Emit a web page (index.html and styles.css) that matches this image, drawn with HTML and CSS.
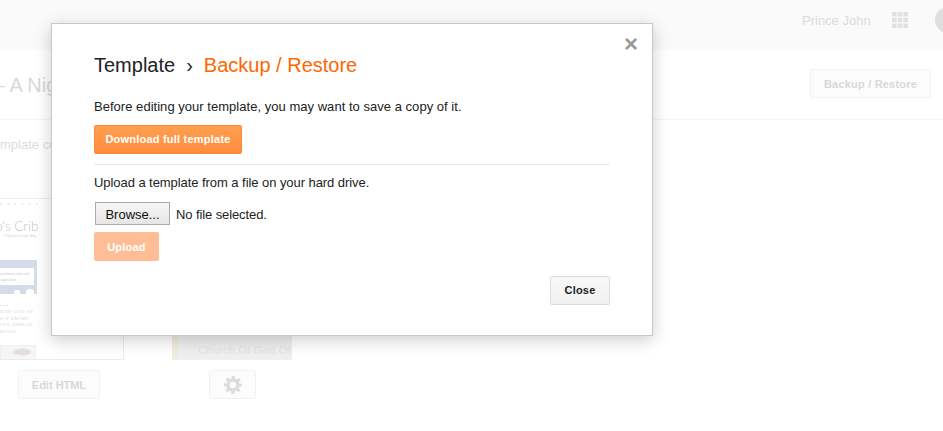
FILE: index.html
```html
<!DOCTYPE html>
<html lang="en">
<head>
<meta charset="utf-8">
<title>Template - Backup / Restore</title>
<link rel="stylesheet" href="styles.css">
</head>
<body>
<div class="page">
  <header class="topbar">
    <span class="user">Prince John</span>
    <svg class="apps" width="16" height="16" viewBox="0 0 16 16" aria-hidden="true">
      <path d="M0 0h4.600v4.600H0zM5.700 0h4.600v4.600H5.700zM11.400 0H16v4.600h-4.600zM0 5.700h4.600v4.600H0zM5.700 5.700h4.600v4.600H5.700zM11.400 5.700H16v4.600h-4.600zM0 11.400h4.600V16H0zM5.700 11.400h4.600V16H5.700zM11.400 11.400H16V16h-4.600z"/>
    </svg>
    <span class="avatar"></span>
  </header>
  <section class="titlerow">
    <h1 class="blogtitle">&#8211; A Nig</h1>
    <button class="ghost backup">Backup / Restore</button>
  </section>
  <p class="desc">mplate cu</p>
  <section class="themes">
    <div class="theme">
      <div class="thumb">
        <div class="thumb-dots">&#8226; &#8226; &#8226; &#8226; &#8226; &#8226;</div>
        <div class="thumb-name">o's Crib</div>
        <div class="thumb-sub">A Nigerian Lifestyle Blog</div>
        <div class="thumb-banner"><div class="thumb-note">saccharine cakes and<br>sugary buns</div></div>
        <div class="thumb-green"></div>
        <div class="thumb-post">H OF GOD OF<br>ICY UROMI<br>CES ANNUAL<br>RVEST</div>
        <div class="thumb-photo"></div>
      </div>
      <button class="ghost edit">Edit HTML</button>
    </div>
    <div class="theme mobile">
      <div class="mobile-thumb"><span class="mobile-text">Church Of God Of</span></div>
      <button class="ghost gear" aria-label="Settings">
        <svg width="18" height="18" viewBox="0 0 18 18" aria-hidden="true">
          <circle class="gear-ring" cx="9" cy="9" r="5"/>
          <circle class="gear-teeth" cx="9" cy="9" r="7.500"/>
        </svg>
      </button>
    </div>
  </section>
</div>

<div class="dialog" role="dialog">
  <button class="x" aria-label="Close">&#215;</button>
  <h2 class="crumbs"><span>Template</span><span class="sep">&#8250;</span><span class="current">Backup / Restore</span></h2>
  <p class="line first">Before editing your template, you may want to save a copy of it.</p>
  <button class="btn orange raised">Download full template</button>
  <hr class="rule">
  <p class="line second">Upload a template from a file on your hard drive.</p>
  <div class="file"><span class="browse">Browse...</span><span class="nofile">No file selected.</span></div>
  <button class="btn orange disabled">Upload</button>
  <div class="foot"><button class="btn close raised">Close</button></div>
</div>
</body>
</html>
```
FILE: styles.css
```css
* { box-sizing: border-box; }
html, body { margin: 0; height: 100%; }
body {
  width: 943px;
  height: 431px;
  overflow: hidden;
  background: #fff;
  font-family: "Liberation Sans", Arial, sans-serif;
  position: relative;
}
button { font-family: inherit; }

/* background page */
.page { height: 431px; overflow: hidden; }
.topbar {
  height: 50px;
  background: #fafafa;
  display: flex;
  align-items: flex-start;
  padding: 12px 0 0 802px;
  white-space: nowrap;
}
.user { font-size: 13px; line-height: 16px; padding-top: 1px; color: #dcdcdc; width: 90px; flex: none; }
.apps { fill: #e1e1e1; flex: none; }
.avatar {
  flex: none;
  width: 26px; height: 26px;
  margin: -5px 0 0 27px;
  border-radius: 50%;
  background: #dedede;
}
.titlerow {
  height: 70px;
  border-bottom: 1px solid #f5f5f5;
  display: flex;
  justify-content: space-between;
  align-items: flex-start;
  padding: 19px 12px 0 0;
}
.blogtitle {
  margin: 4px 0 0 -6px;
  font-size: 20px;
  line-height: 24px;
  font-weight: 400;
  color: #d9d9d9;
  white-space: nowrap;
}
.ghost {
  background: #fcfcfc;
  border: 1px solid #f3f3f3;
  border-radius: 2px;
  color: #d8d8d8;
  font-size: 11px;
  font-weight: 700;
  height: 29px;
  padding: 0;
}
.backup { width: 121px; letter-spacing: .2px; }
.desc {
  margin: 17px 0 0 0;
  font-size: 13px;
  color: #dcdcdc;
  white-space: nowrap;
  height: 15px;
  line-height: 15px;
}
.themes { display: flex; margin-top: 46px; }
.theme { display: flex; flex-direction: column; align-items: flex-start; }
.thumb {
  width: 124px;
  height: 162px;
  border: 1px solid #ececec;
  border-left: 0;
  overflow: hidden;
  color: #dcdcdc;
}
.thumb-dots { font-size: 5px; line-height: 6px; height: 6px; margin-top: 2px; letter-spacing: 2px; color: #d8d8d8; white-space: nowrap; }
.thumb-name { font-family: Lato, "Liberation Sans", sans-serif; font-weight: 300; font-size: 13.500px; line-height: 16px; margin: 11px 0 0 -5px; color: #c4c4c4; white-space: nowrap; }
.thumb-sub { font-family: "Liberation Serif", serif; font-size: 3.200px; line-height: 5px; margin-left: 3px; color: #cfcfcf; white-space: nowrap; }
.thumb-banner {
  width: 37px; height: 34px; margin-top: 21px;
  background:
    radial-gradient(circle at 17px 33px, #fff 3px, transparent 3.500px),
    radial-gradient(circle at 30px 33px, #fff 4px, transparent 4.500px),
    #d5dbe9;
  padding-top: 8px;
}
.thumb-note { width: 34px; height: 17px; background: #fff; font-size: 3px; line-height: 6px; color: #c4c4c4; white-space: nowrap; padding-top: 3px; overflow: hidden; }
.thumb-green { width: 9px; height: 1px; margin-top: 11px; background: repeating-linear-gradient(90deg, #dff0df 0 2px, transparent 2px 3px); }
.thumb-post { font-family: "Liberation Serif", serif; font-size: 4.500px; line-height: 6.600px; margin-top: 3px; color: #d6d4cc; letter-spacing: .5px; white-space: nowrap; }
.thumb-photo {
  width: 36px; height: 14px; margin-top: 10px;
  background:
    radial-gradient(ellipse 11px 4px at 21px 6px, #e2dcdc 0 60%, transparent 100%),
    #f7f6f4;
  border: 1px solid #f0f0f0;
  border-bottom: 0;
}
.edit { width: 82px; margin: 10px 0 0 18px; }
.mobile { margin-left: 48px; }
.mobile-thumb {
  width: 120px;
  height: 162px;
  background: #efefef;
  border-left: 6px solid #f2ece0;
  display: flex;
  align-items: flex-end;
  padding: 0 0 4px 20px;
  overflow: hidden;
  white-space: nowrap;
}
.mobile-text { font-size: 11.500px; color: #e4e4e4; }
.gear { width: 47px; margin: 10px 0 0 37px; }
.gear svg { display: block; margin: 0 auto; }
.gear-ring { fill: none; stroke: #dcdcdc; stroke-width: 3.500; }
.gear-teeth { fill: none; stroke: #dcdcdc; stroke-width: 3; stroke-dasharray: 3 2.890; stroke-dashoffset: 1.500; }

/* dialog */
.dialog {
  position: absolute;
  left: 51px; top: 23px;
  width: 602px; height: 313px;
  background: #fff;
  border: 1px solid #c8c8c8;
  box-shadow: 0 4px 16px rgba(0,0,0,.2);
  padding: 28px 42px 0 42px;
}
.x {
  position: absolute;
  top: 10px; right: 12px;
  width: 18px; height: 20px;
  border: 0; background: none; padding: 0;
  font-size: 24px; line-height: 20px; font-weight: 700;
  color: #9a9a9a;
}
.crumbs {
  margin: 0;
  font-size: 20px;
  font-weight: 400;
  line-height: 26px;
  color: #222;
  display: flex;
  white-space: nowrap;
}
.sep { margin: 0 11px 0 11px; }
.current { color: #f60; }
.line {
  margin: 0;
  font-size: 13px;
  line-height: 15px;
  color: #222;
}
.line.first { margin-top: 21px; letter-spacing: .03px; }
.btn {
  display: block;
  height: 29px;
  border-radius: 2px;
  font-size: 11px;
  font-weight: 700;
  padding: 0;
  letter-spacing: .22px;
}
.raised { padding-bottom: 2px; }
.orange {
  margin-top: 11px;
  width: 148px;
  color: #fff;
  border: 1px solid #f9893a;
  background: linear-gradient(#ff9f50, #ff8c3d);
}
.orange.disabled {
  width: 65px;
  margin-top: 7px;
  background: #ffbd96;
  border-color: #ffbd96;
}
.rule { margin: 10px 0 0; border: 0; border-top: 1px solid #e8e8e8; height: 1px; }
.line.second { margin-top: 10px; letter-spacing: -.06px; }
.file {
  display: flex;
  align-items: center;
  margin-top: 12px;
  margin-left: 1px;
  font-size: 13px;
  color: #222;
}
.browse {
  width: 75px; height: 23px;
  padding-top: 1px;
  border: 1px solid #ababab;
  background: linear-gradient(#f5f5f5, #e6e6e6);
  color: #111;
  display: flex; align-items: center; justify-content: center;
}
.nofile { margin-left: 6px; padding-top: 1px; letter-spacing: -.1px; }
.foot { display: flex; justify-content: flex-end; margin-top: 15px; }
.close {
  width: 60px;
  color: #222;
  border: 1px solid #dcdcdc;
  background: linear-gradient(#f8f8f8, #f1f1f1);
}
```
